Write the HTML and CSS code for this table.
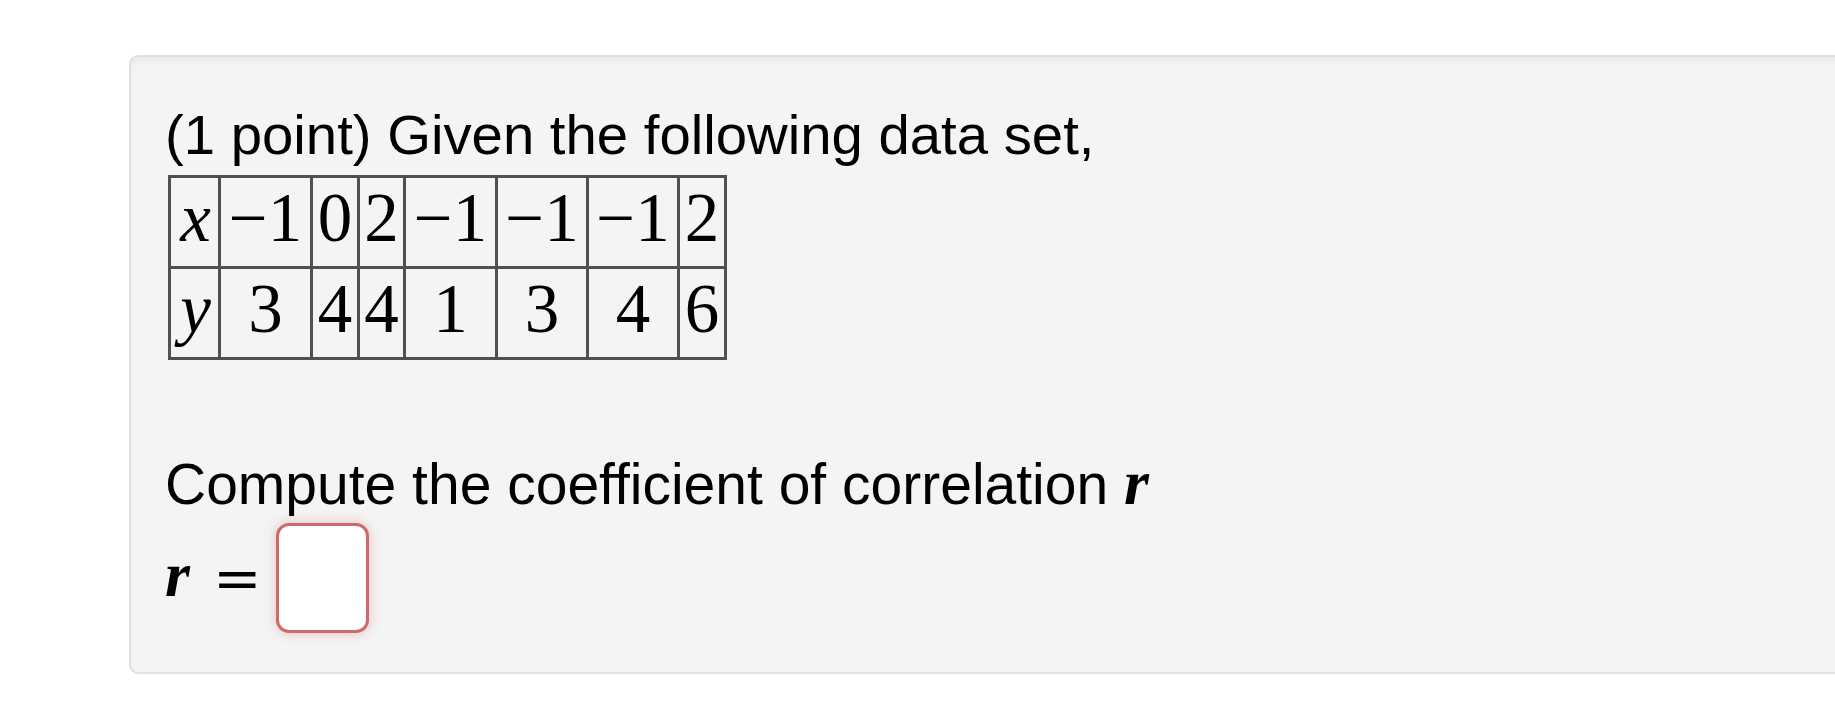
FILE: index.html
```html
<!DOCTYPE html>
<html lang="en">
<head>
<meta charset="utf-8">
<title>Correlation problem</title>
<link rel="stylesheet" href="styles.css">
</head>
<body>
<div class="problem">
  <p class="intro">(1 point) Given the following data set,</p>
  <table class="data">
    <tr>
      <td class="w50 var-cell">x</td>
      <td class="w92">&minus;1</td>
      <td class="w47">0</td>
      <td class="w46">2</td>
      <td class="w92">&minus;1</td>
      <td class="w91">&minus;1</td>
      <td class="w91">&minus;1</td>
      <td class="w47">2</td>
    </tr>
    <tr>
      <td class="var-cell">y</td>
      <td>3</td>
      <td>4</td>
      <td>4</td>
      <td>1</td>
      <td>3</td>
      <td>4</td>
      <td>6</td>
    </tr>
  </table>
  <p class="question">Compute the coefficient of correlation <span class="var">r</span></p>
  <div class="answer">
    <span class="var answer-var">r</span>
    <span class="eq">=</span>
    <input class="ans-input" type="text" aria-label="r">
  </div>
</div>
</body>
</html>
```

FILE: styles.css
```css
html, body {
  margin: 0;
  padding: 0;
  background: #ffffff;
  overflow: hidden;
}

body {
  font-family: "Liberation Sans", Arial, sans-serif;
  color: #000;
  padding-top: 55px;
  padding-left: 129px;
}

.problem {
  width: 1760px;
  box-sizing: border-box;
  background: #f4f4f4;
  border: 2px solid #e0e0e0;
  border-radius: 9px;
  box-shadow: inset 0 5px 8px -2px rgba(0, 0, 0, 0.05);
  padding: 46px 0 39px 34px;
}

.intro,
.question {
  margin: 0;
  font-size: 56.3px;
  line-height: 64px;
}

.question {
  margin-top: 92px;
  font-size: 57px;
}

.var {
  font-family: "Liberation Serif", "Times New Roman", serif;
  font-style: italic;
  font-weight: bold;
  font-size: 64px;
  line-height: 0;
}

.data {
  margin: 8px 0 0 3px;
  border-collapse: separate;
  border-spacing: 0;
  table-layout: fixed;
  width: 559px;
  border-top: 3px solid #505050;
  border-left: 3px solid #505050;
  font-family: "Liberation Serif", "Times New Roman", serif;
  font-size: 69px;
}

.data td {
  box-sizing: border-box;
  height: 91px;
  padding: 0 0 7px 0;
  border-right: 3px solid #505050;
  border-bottom: 3px solid #505050;
  text-align: center;
  vertical-align: middle;
  line-height: normal;
}

.data .var-cell {
  font-style: italic;
  padding-left: 2px;
}

.w50 { width: 50px; }
.w92 { width: 92px; }
.w91 { width: 91px; }
.w47 { width: 47px; }
.w46 { width: 46px; }

.answer {
  display: flex;
  align-items: center;
  margin-top: 7px;
}

.answer-var {
  width: 48px;
  line-height: 1;
  padding-bottom: 6px;
}

.eq {
  font-family: "DejaVu Serif", "Liberation Serif", serif;
  font-size: 58px;
  line-height: 1;
  margin-right: 14px;
}

.ans-input {
  box-sizing: border-box;
  width: 93px;
  height: 110px;
  margin: 0;
  padding: 0;
  background: #ffffff;
  border: 3px solid #cf6a6a;
  border-radius: 13px;
  box-shadow: 0 0 12px rgba(210, 90, 90, 0.35);
  outline: none;
}
```
